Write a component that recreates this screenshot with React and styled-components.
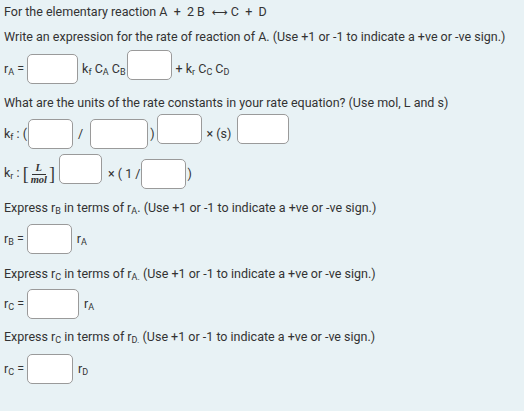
import React from "react";
import styled, { createGlobalStyle } from "styled-components";

const Global = createGlobalStyle`
  html, body {
    margin: 0;
    padding: 0;
    background: #e8f2f5;
  }
  body {
    font-family: Roboto, "Liberation Sans", sans-serif;
    font-size: 12.5px;
    color: #333;
  }
`;

const Page = styled.div`
  width: 524px;
  height: 411px;
  padding: 4px 4px 0 4px;
  box-sizing: border-box;
  background: #e8f2f5;
`;

const Text = styled.p`
  margin: ${(p) => p.$top || 0}px 0 0 0;
  line-height: 16px;
  white-space: nowrap;
`;

const Row = styled.div`
  display: flex;
  align-items: flex-start;
  height: ${(p) => p.$h || 30}px;
  margin-top: ${(p) => p.$top || 0}px;
  white-space: nowrap;
`;

const Label = styled.span`
  align-self: ${(p) => (p.$up ? "flex-start" : "flex-end")};
  line-height: 30px;
  margin: 0 ${(p) => p.$r ?? 3}px 0 ${(p) => p.$l ?? 0}px;
`;

const Box = styled.input`
  box-sizing: border-box;
  width: ${(p) => p.$w}px;
  height: 30px;
  margin: 0;
  padding: 0 4px;
  border: 1px solid #9a9a9a;
  border-radius: 5px;
  background: #fff;
  align-self: ${(p) => (p.$up ? "flex-start" : "flex-end")};
  font: inherit;
`;

const Sub = styled.sub`
  font-size: 9px;
  vertical-align: -2px;
  line-height: 0;
`;

const Arrow = styled.span`
  font-family: "DejaVu Sans", sans-serif;
  font-size: 11px;
  margin: 0 3px 0 4px;
`;

const Frac = styled.span`
  display: inline-flex;
  flex-direction: column;
  align-items: center;
  vertical-align: middle;
  font-family: "Liberation Serif", serif;
  font-style: italic;
  font-weight: bold;
  font-size: 10.5px;
  line-height: 10px;
  margin: 0 2px;
`;

const FracTop = styled.span`
  border-bottom: 1px solid #333;
  padding: 0 4px 1px;
`;

const Bracket = styled.span`
  font-family: "Liberation Serif", serif;
  font-size: 18px;
  vertical-align: middle;
`;

export default function App() {
  return (
    <Page>
      <Global />
      <Text>
        For the elementary reaction A &nbsp;+ &nbsp;2 B <Arrow>⟷</Arrow>C &nbsp;+ &nbsp;D
      </Text>
      <Text $top={8}>
        Write an expression for the rate of reaction of A. (Use +1 or -1 to indicate a +ve or -ve sign.)
      </Text>
      <Row $h={34} $top={5}>
        <Label>
          r<Sub>A</Sub> =
        </Label>
        <Box $w={51} />
        <Label $l={4} $r={1}>
          k<Sub>f</Sub> C<Sub>A</Sub> C<Sub>B</Sub>
        </Label>
        <Box $w={45} $up />
        <Label $l={4}>
          + k<Sub>r</Sub> C<Sub>C</Sub> C<Sub>D</Sub>
        </Label>
      </Row>
      <Text $top={11}>What are the units of the rate constants in your rate equation? (Use mol, L and s)</Text>
      <Row $h={35} $top={3}>
        <Label $r={1}>
          k<Sub>f</Sub> : (
        </Label>
        <Box $w={45} />
        <Label $l={5} $r={7}>/</Label>
        <Box $w={58} />
        <Label $l={2} $r={2}>)</Label>
        <Box $w={45} $up />
        <Label $l={5} $r={6}>× (s)</Label>
        <Box $w={52} $up />
      </Row>
      <Row $h={35} $top={5}>
        <Label $r={4}>
          k<Sub>r</Sub> : <Bracket>[</Bracket>
          <Frac>
            <FracTop>L</FracTop>
            <span>mol</span>
          </Frac>
          <Bracket>]</Bracket>
        </Label>
        <Box $w={43} $up />
        <Label $l={6} $r={1}>× ( 1 /</Label>
        <Box $w={45} />
        <Label $l={1}>)</Label>
      </Row>
      <Text $top={11}>
        Express r<Sub>B</Sub> in terms of r<Sub>A</Sub>. (Use +1 or -1 to indicate a +ve or -ve sign.)
      </Text>
      <Row $top={8}>
        <Label>
          r<Sub>B</Sub> =
        </Label>
        <Box $w={45} />
        <Label $l={5}>
          r<Sub>A</Sub>
        </Label>
      </Row>
      <Text $top={12}>
        Express r<Sub>C</Sub> in terms of r<Sub>A.</Sub> (Use +1 or -1 to indicate a +ve or -ve sign.)
      </Text>
      <Row $top={7}>
        <Label>
          r<Sub>C</Sub> =
        </Label>
        <Box $w={52} />
        <Label $l={5}>
          r<Sub>A</Sub>
        </Label>
      </Row>
      <Text $top={10}>
        Express r<Sub>C</Sub> in terms of r<Sub>D.</Sub> (Use +1 or -1 to indicate a +ve or -ve sign.)
      </Text>
      <Row $top={9}>
        <Label>
          r<Sub>C</Sub> =
        </Label>
        <Box $w={46} />
        <Label $l={5}>
          r<Sub>D</Sub>
        </Label>
      </Row>
    </Page>
  );
}
